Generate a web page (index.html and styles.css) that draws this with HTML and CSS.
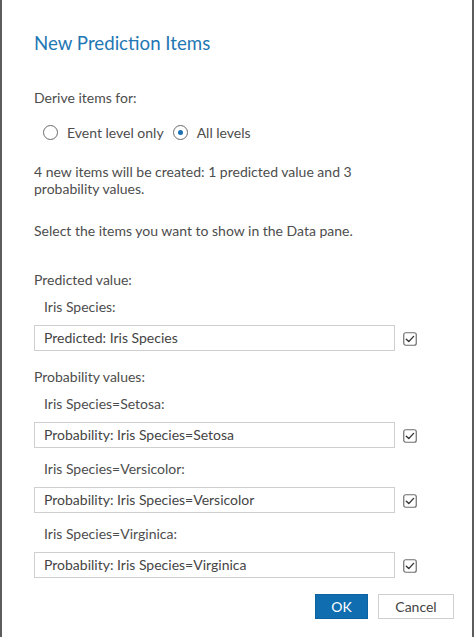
FILE: index.html
```html
<!DOCTYPE html>
<html>
<head>
<meta charset="utf-8">
<link rel="stylesheet" href="styles.css">
</head>
<body>
<div class="dialog">
  <h1 class="title">New Prediction Items</h1>
  <p class="text derive">Derive items for:</p>
  <div class="radios">
    <label class="radio"><span class="circle"></span>Event level only</label>
    <label class="radio"><span class="circle on"></span>All levels</label>
  </div>
  <p class="text info">4 new items will be created: 1 predicted value and 3 probability values.</p>
  <p class="text select">Select the items you want to show in the Data pane.</p>

  <p class="text section first">Predicted value:</p>
  <div class="item">
    <div class="sub">Iris Species:</div>
    <div class="row">
      <div class="input">Predicted: Iris Species</div>
      <svg class="check" width="14" height="14" viewBox="0 0 14 14"><rect x="0.75" y="0.75" width="12.5" height="12.5" rx="2" fill="#fff" stroke="#6e6e6e" stroke-width="1.2"/><path d="M3.3 7.2 L5.8 9.6 L10.6 4.4" fill="none" stroke="#333" stroke-width="1.4" stroke-linecap="round" stroke-linejoin="round"/></svg>
    </div>
  </div>

  <p class="text section">Probability values:</p>
  <div class="item">
    <div class="sub">Iris Species=Setosa:</div>
    <div class="row">
      <div class="input">Probability: Iris Species=Setosa</div>
      <svg class="check" width="14" height="14" viewBox="0 0 14 14"><rect x="0.75" y="0.75" width="12.5" height="12.5" rx="2" fill="#fff" stroke="#6e6e6e" stroke-width="1.2"/><path d="M3.3 7.2 L5.8 9.6 L10.6 4.4" fill="none" stroke="#333" stroke-width="1.4" stroke-linecap="round" stroke-linejoin="round"/></svg>
    </div>
  </div>
  <div class="item">
    <div class="sub">Iris Species=Versicolor:</div>
    <div class="row">
      <div class="input">Probability: Iris Species=Versicolor</div>
      <svg class="check" width="14" height="14" viewBox="0 0 14 14"><rect x="0.75" y="0.75" width="12.5" height="12.5" rx="2" fill="#fff" stroke="#6e6e6e" stroke-width="1.2"/><path d="M3.3 7.2 L5.8 9.6 L10.6 4.4" fill="none" stroke="#333" stroke-width="1.4" stroke-linecap="round" stroke-linejoin="round"/></svg>
    </div>
  </div>
  <div class="item">
    <div class="sub">Iris Species=Virginica:</div>
    <div class="row">
      <div class="input">Probability: Iris Species=Virginica</div>
      <svg class="check" width="14" height="14" viewBox="0 0 14 14"><rect x="0.75" y="0.75" width="12.5" height="12.5" rx="2" fill="#fff" stroke="#6e6e6e" stroke-width="1.2"/><path d="M3.3 7.2 L5.8 9.6 L10.6 4.4" fill="none" stroke="#333" stroke-width="1.4" stroke-linecap="round" stroke-linejoin="round"/></svg>
    </div>
  </div>

  <div class="buttons">
    <button class="btn ok">OK</button>
    <button class="btn cancel">Cancel</button>
  </div>
</div>
</body>
</html>
```

FILE: styles.css
```css
html, body {
  margin: 0;
  padding: 0;
  background: #fff;
}
.dialog {
  box-sizing: border-box;
  width: 474px;
  height: 637px;
  border-left: 2px solid #5c5c5c;
  border-right: 2px solid #5c5c5c;
  padding: 32px 18px 0 32px;
  font-family: Lato, "Noto Sans", sans-serif;
  font-size: 14px;
  color: #4d4d4d;
}
.title {
  margin: 0;
  font-size: 18.7px;
  line-height: 22px;
  font-weight: 400;
  color: #1f77b4;
}
.text {
  margin: 0;
  line-height: 17px;
}
.derive {
  margin-top: 35px;
}
.radios {
  display: flex;
  gap: 9px;
  margin-top: 18px;
  margin-left: 9px;
}
.radio {
  display: flex;
  align-items: center;
  gap: 9px;
  line-height: 17px;
}
.circle {
  box-sizing: border-box;
  width: 15px;
  height: 15px;
  border: 1px solid #6a6a6a;
  border-radius: 50%;
  display: flex;
  align-items: center;
  justify-content: center;
}
.circle.on::after {
  content: "";
  width: 5px;
  height: 5px;
  border-radius: 50%;
  background: #1a6fb3;
}
.info {
  width: 360px;
  margin-top: 22px;
}
.select {
  margin-top: 25px;
}
.section {
  margin-top: 17px;
}
.section.first {
  margin-top: 32px;
}
.item {
  margin-top: 12px;
}
.section + .item {
  margin-top: 10px;
}
.sub {
  margin-left: 10px;
  line-height: 18px;
}
.row {
  display: flex;
  align-items: center;
  gap: 8px;
  margin-top: 9px;
}
.input {
  box-sizing: border-box;
  width: 361px;
  height: 26px;
  border: 1px solid #cfcfcf;
  padding: 0 9px;
  line-height: 24px;
  color: #444;
}
.check {
  display: block;
  margin-top: 1px;
}
.buttons {
  display: flex;
  justify-content: flex-end;
  gap: 10px;
  margin-top: 16px;
}
.btn {
  box-sizing: border-box;
  height: 25px;
  font-family: Lato, "Noto Sans", sans-serif;
  font-size: 14px;
  border-radius: 0;
  padding: 0;
}
.ok {
  width: 53px;
  background: #0f6db0;
  border: 1px solid #0d62a0;
  color: #fff;
}
.cancel {
  width: 76px;
  background: #fff;
  border: 1px solid #cfcfcf;
  color: #444;
}
```
